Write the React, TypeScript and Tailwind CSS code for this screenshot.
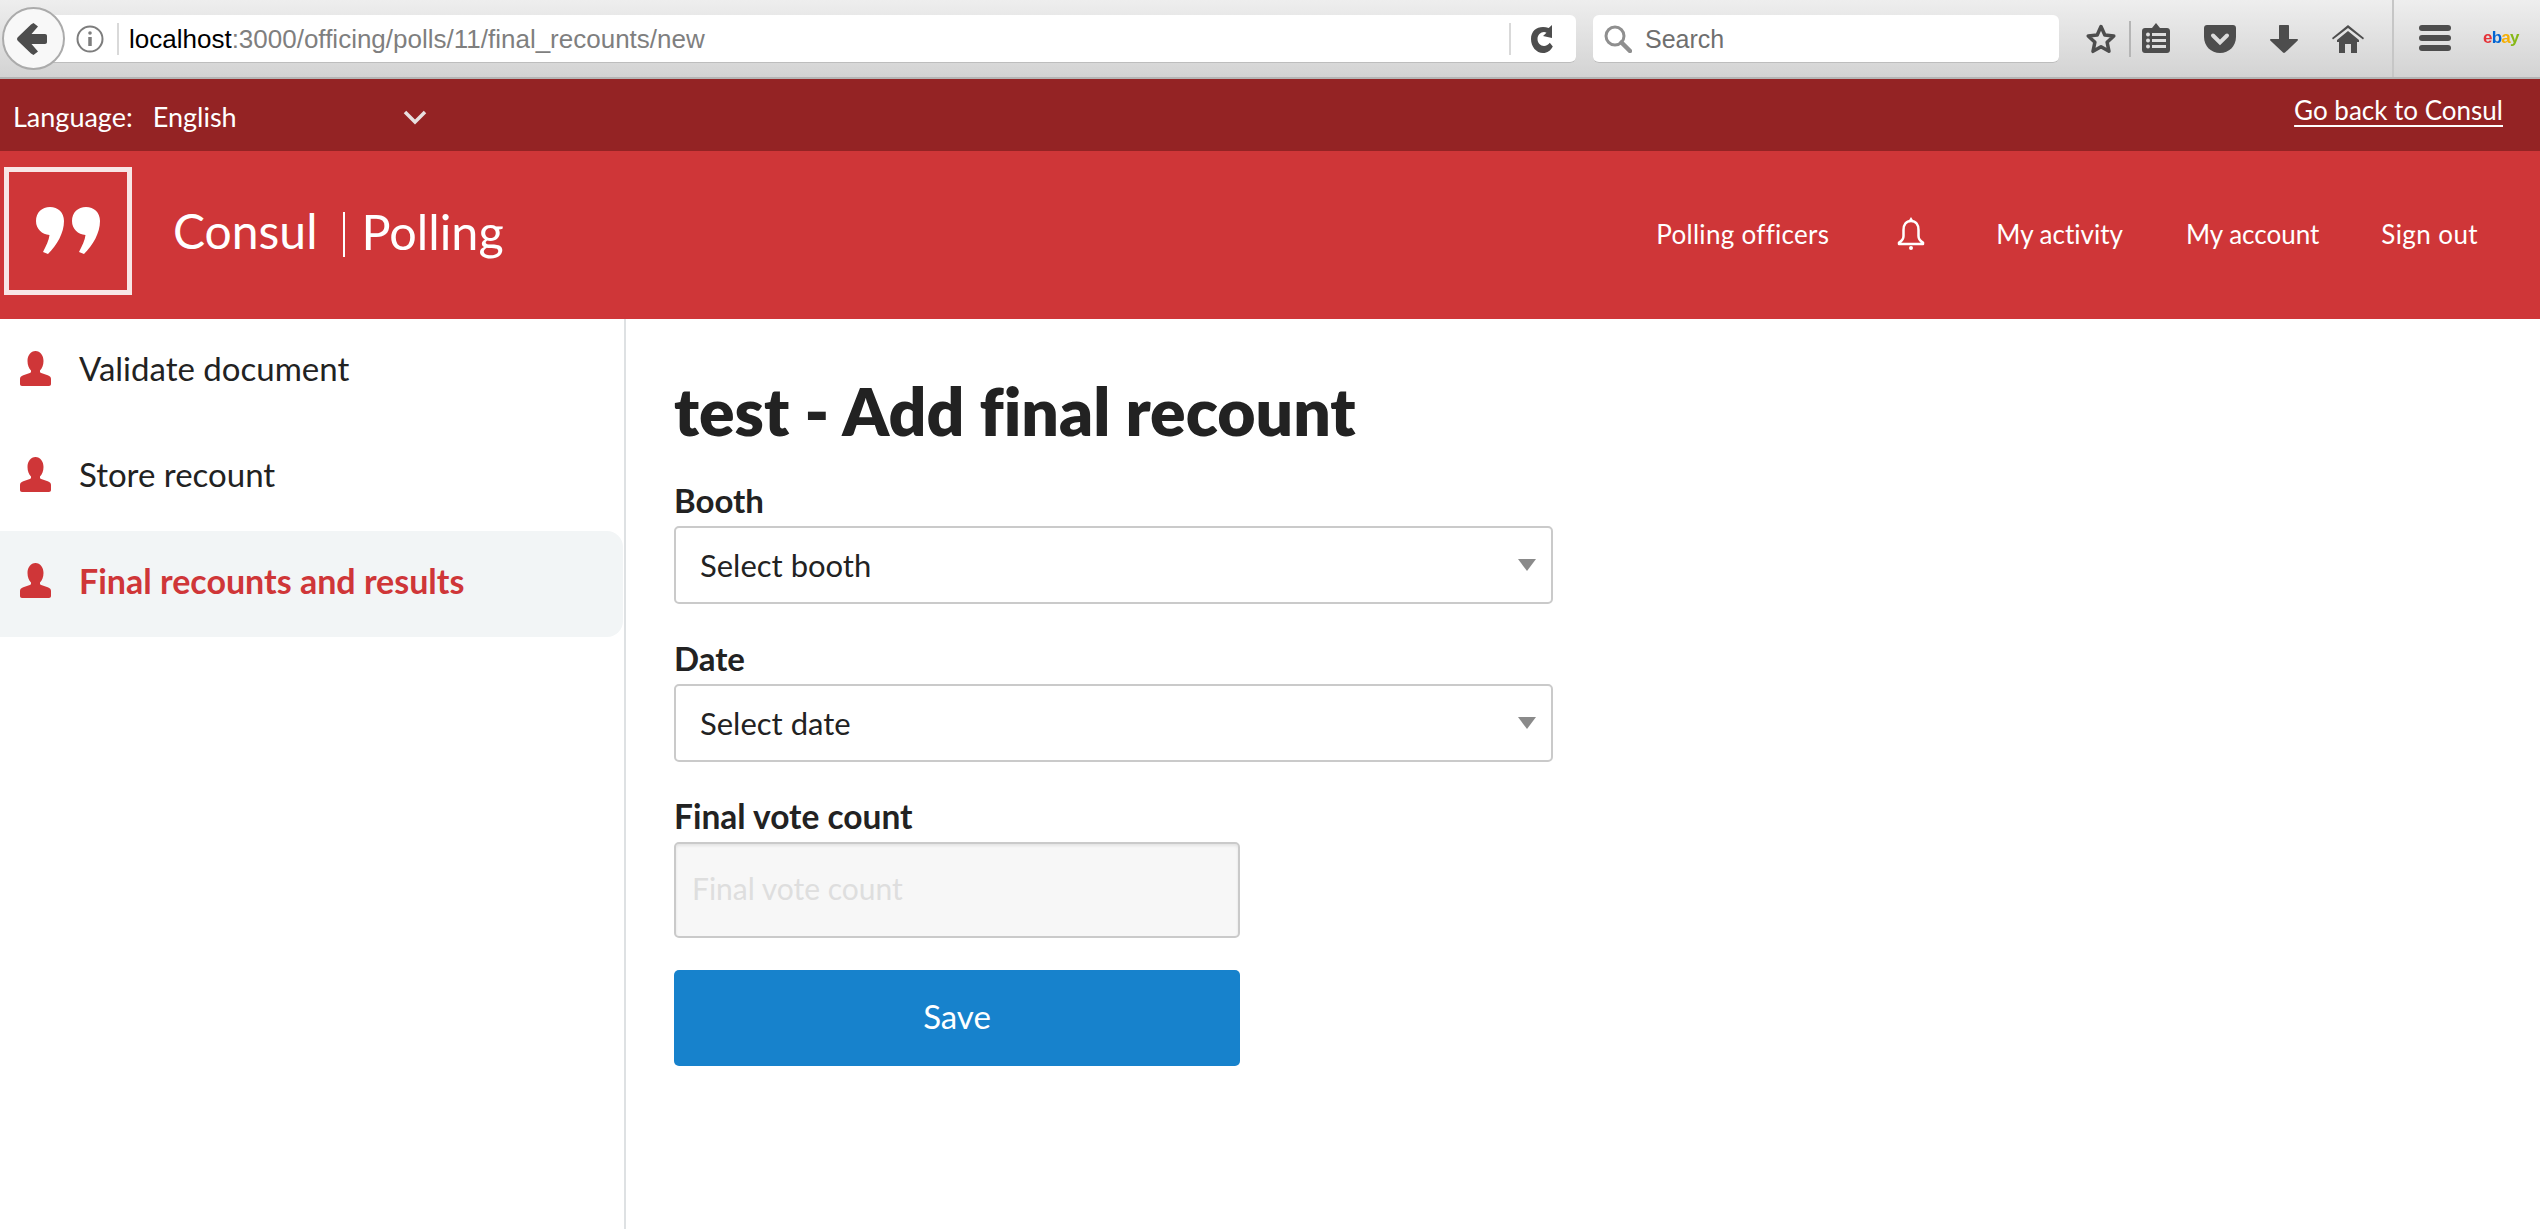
import React from 'react';

const BODY_FONT = "font-['Lato','Noto_Sans',sans-serif] [font-variant-ligatures:none]";

const Person: React.FC = () => (
  <svg width="31" height="35" viewBox="0 0 31 35" className="shrink-0 fill-[#cf3638]">
    <path d="M15.500 0c4.800 0 8 4.500 8 10 0 4-1.400 7.500-3.500 9.500v1c0 .8.4 1.200 1.200 1.600l6.500 2.200c2.300.9 3.300 1.800 3.300 3.700V33c0 1.200-.8 2-2 2H2c-1.200 0-2-.8-2-2v-5c0-1.900 1-2.800 3.300-3.700l6.500-2.200c.8-.4 1.200-.8 1.200-1.600v-1c-2.100-2-3.500-5.500-3.500-9.500 0-5.500 3.200-10 8-10z" />
  </svg>
);

const BrowserBar: React.FC = () => (
  <div className="relative flex h-[79px] shrink-0 items-start border-b-2 border-[#b4b4b4] bg-linear-to-b from-[#eeeeee] to-[#d3d3d3] font-['Liberation_Sans',sans-serif]">
    {/* back button sits over the url field */}
    <div className="absolute left-[2px] top-[7px] z-10 flex h-[63px] w-[63px] items-center justify-center rounded-full border-2 border-[#ababab] bg-[#f8f8f8]">
      <svg width="30" height="32" viewBox="0 0 30 32" className="-ml-[4px] fill-[#4d4d4d]">
        <path d="M14 1.500 16.500 0 21 3.500 14.500 11H28c1.200 0 2 .8 2 2v6c0 1.200-.8 2-2 2H14.500L21 28.500 16.500 32 14 30.500 1 18c-1.300-1.200-1.300-2.800 0-4z" />
      </svg>
    </div>
    <div className="ml-[40px] mt-[15px] flex h-[48px] w-[1536px] items-center rounded-r-[6px] border-b border-[#bdbdbd] bg-white">
      <svg width="28" height="28" viewBox="0 0 28 28" className="ml-[36px] shrink-0 fill-none stroke-[#7d7d7d]">
        <circle cx="14" cy="14" r="12.500" strokeWidth="2" />
        <path d="M14 12v9" strokeWidth="3.500" />
        <circle cx="14" cy="8" r="1.800" className="fill-[#7d7d7d] stroke-none" />
      </svg>
      <div className="ml-[13px] h-[32px] w-[2px] bg-[#d9d9d9]" />
      <span className="ml-[10px] pt-[2px] text-[26px] text-[#7f7f7f]"><span className="text-black">localhost</span>:3000/officing/polls/11/final_recounts/new</span>
      <div className="ml-auto h-[32px] w-[2px] bg-[#d9d9d9]" />
      <svg width="22" height="28" viewBox="0 0 22 28" className="ml-[20px] mr-[23px] fill-[#4d4d4d]">
        <path d="M21 0v13l-9-2 3.500-3.200C14.700 7.300 13.800 7 13 7c-3.400 0-6.500 3-6.500 7s3 7 6.500 7c2.300 0 4.500-1.300 5.800-3.200l3 3.700C19.500 25.700 16.500 28 12 28 5.300 28 0 21.700 0 14S5.300 2 12 2c2 0 4 .4 5.700.9z" />
      </svg>
    </div>
    <div className="ml-[17px] mt-[15px] flex h-[48px] w-[466px] items-center rounded-[6px] border-b border-[#bdbdbd] bg-white">
      <svg width="28" height="28" viewBox="0 0 28 28" className="ml-[11px] shrink-0 fill-none stroke-[#8f8f8f]">
        <circle cx="11" cy="11" r="9" strokeWidth="3" />
        <path d="M17.500 17.500 26 26" strokeWidth="4.500" strokeLinecap="round" />
      </svg>
      <span className="ml-[13px] pt-[2px] text-[25px] text-[#6f6f6f]">Search</span>
    </div>
    <div className="flex h-full flex-1 items-start">
      <svg width="32" height="32" viewBox="0 0 32 32" className="ml-[26px] mt-[23px] fill-none stroke-[#4d4d4d]">
        <path d="M16 3.500 19.800 12l9 1-6.700 6.200 1.900 9.100-8-4.600-8 4.600 1.900-9.100L3.200 13l9-1z" strokeWidth="3.500" strokeLinejoin="round" />
      </svg>
      <div className="ml-[12px] mt-[21px] h-[36px] w-[2px] bg-[#b5b5b5]" />
      <svg width="28" height="30" viewBox="0 0 28 30" className="ml-[11px] mt-[23px] fill-[#4d4d4d]">
        <path d="M3 5h7l4-5 4 5h7c1.700 0 3 1.300 3 3v19c0 1.700-1.300 3-3 3H3c-1.700 0-3-1.300-3-3V8c0-1.700 1.300-3 3-3z" />
        <path d="M10 10h14v3H10zM10 16h14v3H10zM10 22h14v3H10z" className="fill-[#dedede]" />
        <circle cx="6" cy="11.500" r="2" className="fill-[#dedede]" />
        <circle cx="6" cy="17.500" r="2" className="fill-[#dedede]" />
        <circle cx="6" cy="23.500" r="2" className="fill-[#dedede]" />
      </svg>
      <svg width="32" height="28" viewBox="0 0 32 28" className="ml-[34px] mt-[25px]">
        <path d="M3 0h26c1.700 0 3 1.300 3 3v9c0 9-7 16-16 16S0 21 0 12V3c0-1.700 1.300-3 3-3z" className="fill-[#4d4d4d]" />
        <path d="M9 10.500l7 7 7-7" fill="none" stroke="#dcdcdc" strokeWidth="4" strokeLinecap="round" />
      </svg>
      <svg width="28" height="28" viewBox="0 0 28 28" className="ml-[34px] mt-[25px] fill-[#4d4d4d]">
        <path d="M9 1c0-.6.400-1 1-1h8c.6 0 1 .4 1 1v13h8c1 0 1.300.7.700 1.400L15 27.600c-.6.500-1.400.5-2 0L.3 15.400C-.3 14.700 0 14 1 14h8z" />
      </svg>
      <svg width="32" height="28" viewBox="0 0 32 28" className="ml-[34px] mt-[25px] fill-[#4d4d4d]">
        <path d="M16 0 32 13l-1 1.500L16 3 1 14.500 0 13z" />
        <path d="M16 6 27 15v2h-2v11h-6v-9h-6v9H7V17H5v-2z" />
      </svg>
      <div className="ml-[28px] h-full w-[2px] bg-[#c6c6c6]" />
      <div className="ml-[25px] mt-[25px] flex w-[32px] flex-col gap-[4px]">
        <div className="h-[6px] rounded-full bg-[#4d4d4d]" />
        <div className="h-[6px] rounded-full bg-[#4d4d4d]" />
        <div className="h-[6px] rounded-full bg-[#4d4d4d]" />
      </div>
      <span className="ml-[32px] mt-[29px] text-[17px] font-bold leading-[18px] tracking-[-0.8px] blur-[0.5px]">
        <span className="text-[#e53238]">e</span><span className="text-[#0064d2]">b</span><span className="text-[#f5af02]">a</span><span className="text-[#86b817]">y</span>
      </span>
    </div>
  </div>
);

const NavLink: React.FC<{ children: React.ReactNode; className?: string }> = ({ children, className }) => (
  <a className={`pb-[2px] text-[26px] text-white ${className ?? ''}`}>{children}</a>
);

const SideItem: React.FC<{ label: string; active?: boolean }> = ({ label, active }) => (
  <div className={`flex h-[106px] items-center pb-[7px] pl-[20px] ${active ? 'mr-[1px] rounded-r-[16px] bg-[#f2f5f6]' : ''}`}>
    <Person />
    <span className={`ml-[28px] text-[33px] ${active ? 'text-[34px] font-bold text-[#cf3638]' : 'text-[#222222]'}`}>{label}</span>
  </div>
);

const SelectField: React.FC<{ label: string; placeholder: string; className?: string }> = ({ label, placeholder, className }) => (
  <div className={className}>
    <label className="block h-[30px] text-[33px] font-bold leading-[27px] text-[#222222]">{label}</label>
    <div className="relative mt-[9px] w-[879px]">
      <select className="block h-[78px] w-full appearance-none rounded-[5px] border-2 border-[#cacaca] bg-white pl-[24px] text-[31px] text-[#222222]">
        <option>{placeholder}</option>
      </select>
      <svg width="18" height="12" viewBox="0 0 18 12" className="absolute right-[17px] top-[33px] fill-[#8a8a8a]">
        <path d="M0 0h18L9 12z" />
      </svg>
    </div>
  </div>
);

const App: React.FC = () => {
  return (
    <div className={`flex h-screen flex-col overflow-hidden bg-white ${BODY_FONT}`}>
      <BrowserBar />

      <div className="flex h-[72px] shrink-0 items-start justify-between bg-[#942324] pl-[13px] pr-[37px] text-white">
        <div className="mt-[19px] flex items-center text-[27px] leading-[38px]">
          <span>Language:</span>
          <span className="ml-[20px]">English</span>
          <svg width="24" height="15" viewBox="0 0 24 15" className="ml-[166px] fill-none stroke-[#e8e0e0]">
            <path d="M2 2l10 10L22 2" strokeWidth="3.500" />
          </svg>
        </div>
        <a className="mt-[12px] text-[26px] leading-[38px] underline underline-offset-[5px]">Go back to Consul</a>
      </div>

      <header className="flex h-[168px] shrink-0 items-start bg-[#cf3638] pl-[4px] pr-[62px] text-white">
        <div className="mt-[16px] flex h-[128px] w-[128px] shrink-0 items-center justify-center border-[5px] border-[#f8e6e6]">
          <svg width="64" height="47" viewBox="0 0 64 47" className="mb-[2px] fill-white">
            <path d="M14 0c8 0 14 5.500 14 14 0 12-7 24-16 33l-5-2c3-6 6-12 6.500-17C6 27.500 0 22 0 14 0 5.500 6 0 14 0z" />
            <path d="M50 0c8 0 14 5.500 14 14 0 12-7 24-16 33l-5-2c3-6 6-12 6.500-17C42 27.500 36 22 36 14 36 5.500 42 0 50 0z" />
          </svg>
        </div>
        <div className="ml-[41px] mt-[56px] text-[48px] leading-none">Consul</div>
        <div className="ml-[26px] mt-[61px] h-[45px] w-[2px] bg-white" />
        <div className="ml-[16px] mt-[56px] text-[48.500px] leading-none">Polling</div>
        <nav className="ml-auto flex h-full items-center">
          <NavLink className="tracking-[0.300px]">Polling officers</NavLink>
          <svg width="28" height="33" viewBox="0 0 28 33" className="ml-[68px] mb-[4px] fill-none stroke-white">
            <path d="M14 4c5 0 7.500 4 7.500 9v6c0 3 1.500 5 4.500 6.500v1.500H2v-1.500C5 24 6.500 22 6.500 19v-6c0-5 2.500-9 7.500-9z" strokeWidth="2.500" strokeLinejoin="round" />
            <path d="M14 0l2.500 4h-5z" className="fill-white stroke-none" />
            <circle cx="14" cy="31" r="2" className="fill-white stroke-none" />
          </svg>
          <NavLink className="ml-[71px]">My activity</NavLink>
          <NavLink className="ml-[63px]">My account</NavLink>
          <NavLink className="ml-[62px] tracking-[0.400px]">Sign out</NavLink>
        </nav>
      </header>

      <div className="flex flex-1">
        <aside className="w-[626px] shrink-0 border-r-2 border-[#dee1e3]">
          <SideItem label="Validate document" />
          <SideItem label="Store recount" />
          <SideItem label="Final recounts and results" active />
        </aside>
        <main className="flex-1 pl-[48px] pt-[52px] text-[#222222]">
          <h1 className="text-[66px] font-extrabold leading-[80px]">test - Add final recount</h1>
          <SelectField label="Booth" placeholder="Select booth" className="mt-[36px]" />
          <SelectField label="Date" placeholder="Select date" className="mt-[41px]" />
          <label className="mt-[41px] block h-[30px] text-[33.500px] font-bold leading-[27px]">Final vote count</label>
          <input
            placeholder="Final vote count"
            className="mt-[9px] block h-[96px] w-[566px] rounded-[5px] border-2 border-[#cacaca] bg-[#f7f7f7] pb-[5px] pl-[16px] text-[30px] shadow-[inset_0_2px_3px_rgba(0,0,0,0.08)] placeholder:text-[#dedede]"
          />
          <button className="mt-[32px] block h-[96px] w-[566px] rounded-[5px] bg-[#1782cc] pb-[3px] text-[33px] text-white">Save</button>
        </main>
      </div>
    </div>
  );
};

export default App;
